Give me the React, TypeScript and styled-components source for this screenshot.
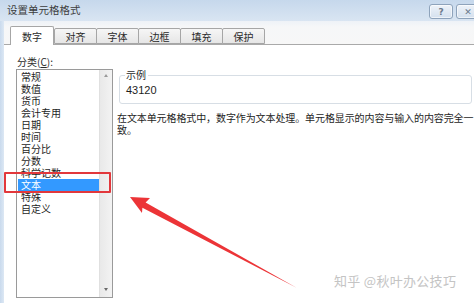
import React from "react";
import styled, { createGlobalStyle } from "styled-components";

const Global = createGlobalStyle`
  html, body { margin: 0; padding: 0; background: #ffffff; }
  body { width: 474px; height: 303px; overflow: hidden; font-family: "Noto Sans CJK SC", "Noto Sans", sans-serif; }
`;

const Window = styled.div`
  position: relative;
  width: 474px;
  height: 303px;
  display: flex;
  flex-direction: column;
  background: #ffffff;
  overflow: hidden;
`;

const TitleBar = styled.div`
  height: 21px;
  flex: none;
  display: flex;
  align-items: center;
  justify-content: space-between;
  padding-left: 7px;
  background: linear-gradient(#c6d8ec, #d9e5f2);
`;

const Title = styled.div`
  font-size: 10.5px;
  color: #3d3d3d;
  line-height: 12px;
  margin-top: -1px;
`;

const Controls = styled.div`
  display: flex;
  gap: 3px;
  align-self: flex-start;
  margin-top: 4px;
  margin-right: -6px;
`;

const CtrlButton = styled.div<{ $w: number }>`
  width: ${(p) => p.$w}px;
  height: 13px;
  border: 1px solid #8ea3bb;
  border-radius: 3px;
  background: linear-gradient(#eef3f9, #d4e0ee);
  display: flex;
  align-items: center;
  justify-content: center;
  font-family: "DejaVu Sans", sans-serif;
  font-size: 9px;
  font-weight: bold;
  color: #6b7a8c;
  box-shadow: inset 0 0 0 1px rgba(255,255,255,0.6);
`;

const Body = styled.div`
  flex: 1;
  display: flex;
  min-height: 0;
`;

const FrameEdge = styled.div`
  width: 4px;
  flex: none;
  background: linear-gradient(90deg, #c9daed, #dde8f4);
`;

const Main = styled.div`
  flex: 1;
  display: flex;
  flex-direction: column;
  min-width: 0;
`;

const TabStrip = styled.div`
  height: 24px;
  flex: none;
  display: flex;
  align-items: flex-end;
  padding-left: 6px;
  background: linear-gradient(#eef2f7, #f6f7f8 6px, #f7f7f7);
  border-bottom: 1px solid #a9a9a9;
  box-sizing: border-box;
`;

const Tab = styled.div<{ $active?: boolean }>`
  width: ${(p) => (p.$active ? 44 : 43)}px;
  height: ${(p) => (p.$active ? 19 : 16)}px;
  margin-left: ${(p) => (p.$active ? 0 : -1)}px;
  margin-bottom: ${(p) => (p.$active ? -1 : 0)}px;
  box-sizing: border-box;
  border: 1px solid #a6a6a6;
  border-bottom: ${(p) => (p.$active ? "none" : "1px solid #a6a6a6")};
  border-radius: 2px 2px 0 0;
  background: ${(p) => (p.$active ? "#ffffff" : "linear-gradient(#f6f6f6, #e6e6e6)")};
  display: flex;
  align-items: center;
  justify-content: center;
  font-size: 10px;
  color: #2a2a2a;
  position: relative;
  z-index: ${(p) => (p.$active ? 1 : 0)};
  &:nth-child(2) { margin-left: 0; }
`;

const Panel = styled.div`
  flex: 1;
  display: flex;
  padding-left: 12px;
  min-height: 0;
`;

const LeftCol = styled.div`
  width: 97px;
  flex: none;
  display: flex;
  flex-direction: column;
  padding-top: 11px;
`;

const Label = styled.div`
  font-size: 10px;
  line-height: 12px;
  height: 12px;
  color: #2a2a2a;
  padding-left: 1px;
  u { text-decoration: underline; }
`;

const ListBox = styled.div`
  margin-top: 1px;
  height: 229px;
  box-sizing: border-box;
  border: 1px solid #9a9a9a;
  display: flex;
  background: #fff;
`;

const Items = styled.div`
  flex: 1;
  padding-top: 1px;
  padding-left: 1px;
`;

const Item = styled.div<{ $sel?: boolean }>`
  height: 12px;
  line-height: 12px;
  font-size: 10px;
  padding-left: 3px;
  color: ${(p) => (p.$sel ? "#ffffff" : "#1e1e1e")};
  background: ${(p) => (p.$sel ? "#3399ff" : "transparent")};
`;

const ScrollBar = styled.div`
  width: 13px;
  flex: none;
  background: linear-gradient(90deg, #e9e9e9, #f3f3f3);
  border-left: 1px solid #e0e0e0;
  display: flex;
  flex-direction: column;
  justify-content: space-between;
  align-items: center;
  padding: 4px 0 6px;
  box-sizing: border-box;
`;

const Arrow = styled.div<{ $down?: boolean }>`
  width: 0;
  height: 0;
  border-left: 2.5px solid transparent;
  border-right: 2.5px solid transparent;
  ${(p) => (p.$down ? "border-top: 3px solid #6a6a6a;" : "border-bottom: 3px solid #9a9a9a;")}
`;

const RightCol = styled.div`
  flex: 1;
  display: flex;
  flex-direction: column;
  padding-top: 24px;
  padding-left: 6px;
  padding-right: 2px;
  min-width: 0;
`;

const Group = styled.fieldset`
  margin: 0;
  padding: 2px 0 3px 6px;
  border: 1px solid #d7dee5;
  border-radius: 3px;
  height: 35px;
  box-sizing: border-box;
`;

const Legend = styled.legend`
  font-size: 10px;
  line-height: 12px;
  color: #2a2a2a;
  padding: 0 2px 0 1px;
  margin-left: -1px;
`;

const Sample = styled.div`
  font-family: "Liberation Sans", Arial, sans-serif;
  font-size: 11px;
  line-height: 13px;
  color: #1e1e1e;
  margin-top: 1px;
`;

const Desc = styled.p`
  margin: 8px 0 0 -2px;
  font-size: 10px;
  line-height: 11.5px;
  color: #1e1e1e;
  white-space: nowrap;
  letter-spacing: -0.1px;
`;

const Highlight = styled.div`
  position: absolute;
  left: 4px;
  top: 172px;
  width: 107px;
  height: 21px;
  box-sizing: border-box;
  border: 2px solid #e2383c;
  border-radius: 1px;
  pointer-events: none;
`;

const Pointer = styled.svg`
  position: absolute;
  left: 0;
  top: 0;
  pointer-events: none;
`;

const Watermark = styled.div`
  position: absolute;
  left: 334px;
  top: 273px;
  font-size: 13px;
  line-height: 16px;
  color: #c4c4c4;
  letter-spacing: 0.3px;
  text-shadow: 0 0 1px rgba(255,255,255,0.9);
  white-space: nowrap;
`;

const categories = ["常规", "数值", "货币", "会计专用", "日期", "时间", "百分比", "分数", "科学记数", "文本", "特殊", "自定义"];
const tabs = ["数字", "对齐", "字体", "边框", "填充", "保护"];

export default function App() {
  return (
    <>
      <Global />
      <Window>
        <TitleBar>
          <Title>设置单元格格式</Title>
          <Controls>
            <CtrlButton $w={22}>?</CtrlButton>
            <CtrlButton $w={22}>✕</CtrlButton>
          </Controls>
        </TitleBar>
        <Body>
          <FrameEdge />
          <Main>
            <TabStrip>
              {tabs.map((t, i) => (
                <Tab key={t} $active={i === 0}>{t}</Tab>
              ))}
            </TabStrip>
            <Panel>
              <LeftCol>
                <Label>分类(<u>C</u>):</Label>
                <ListBox>
                  <Items>
                    {categories.map((c) => (
                      <Item key={c} $sel={c === "文本"}>{c}</Item>
                    ))}
                  </Items>
                  <ScrollBar>
                    <Arrow />
                    <Arrow $down />
                  </ScrollBar>
                </ListBox>
              </LeftCol>
              <RightCol>
                <Group>
                  <Legend>示例</Legend>
                  <Sample>43120</Sample>
                </Group>
                <Desc>
                  在文本单元格格式中，数字作为文本处理。单元格显示的内容与输入的内容完全一
                  <br />
                  致。
                </Desc>
              </RightCol>
            </Panel>
          </Main>
        </Body>
        <Highlight />
        <Pointer width="474" height="303" viewBox="0 0 474 303">
          <polygon
            points="130,197 150,198 145.6,202.6 297,288 142.4,207.8 142,213"
            fill="#ec3437"
          />
        </Pointer>
        <Watermark>知乎 @秋叶办公技巧</Watermark>
      </Window>
    </>
  );
}
